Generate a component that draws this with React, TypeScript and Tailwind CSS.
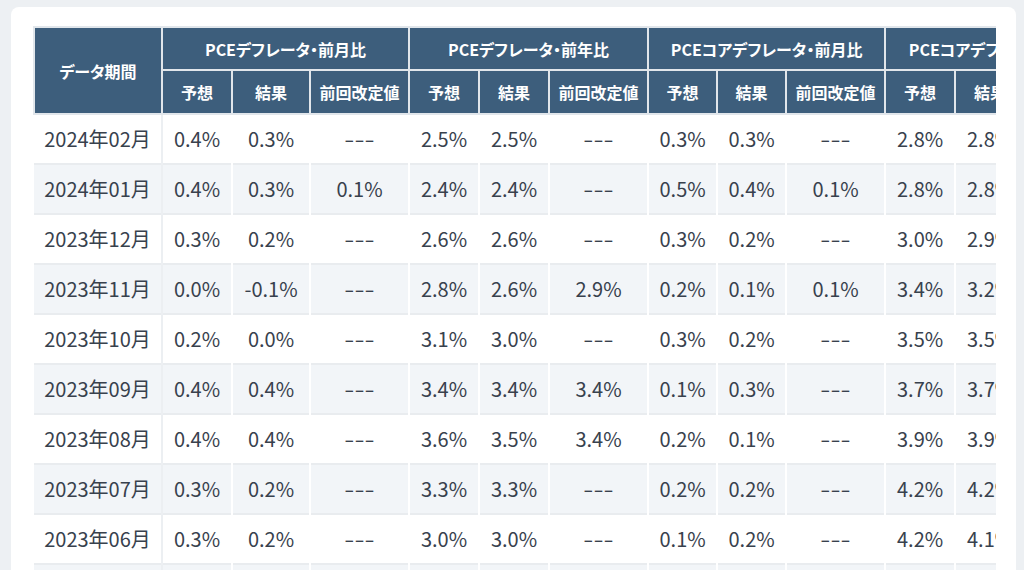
type Row = {
  period: string
  values: string[]
}

const groups = [
  "PCEデフレータ・前月比",
  "PCEデフレータ・前年比",
  "PCEコアデフレータ・前月比",
  "PCEコアデフレータ・前年比",
]

const subHeads = ["予想", "結果", "前回改定値"]

const colWidths = [70, 78, 99, 70, 70, 99, 69, 69, 99, 70, 70, 99]

const rows: Row[] = [
  { period: "2024年02月", values: ["0.4%", "0.3%", "---", "2.5%", "2.5%", "---", "0.3%", "0.3%", "---", "2.8%", "2.8%", "---"] },
  { period: "2024年01月", values: ["0.4%", "0.3%", "0.1%", "2.4%", "2.4%", "---", "0.5%", "0.4%", "0.1%", "2.8%", "2.8%", "2.9%"] },
  { period: "2023年12月", values: ["0.3%", "0.2%", "---", "2.6%", "2.6%", "---", "0.3%", "0.2%", "---", "3.0%", "2.9%", "---"] },
  { period: "2023年11月", values: ["0.0%", "-0.1%", "---", "2.8%", "2.6%", "2.9%", "0.2%", "0.1%", "0.1%", "3.4%", "3.2%", "---"] },
  { period: "2023年10月", values: ["0.2%", "0.0%", "---", "3.1%", "3.0%", "---", "0.3%", "0.2%", "---", "3.5%", "3.5%", "---"] },
  { period: "2023年09月", values: ["0.4%", "0.4%", "---", "3.4%", "3.4%", "3.4%", "0.1%", "0.3%", "---", "3.7%", "3.7%", "---"] },
  { period: "2023年08月", values: ["0.4%", "0.4%", "---", "3.6%", "3.5%", "3.4%", "0.2%", "0.1%", "---", "3.9%", "3.9%", "---"] },
  { period: "2023年07月", values: ["0.3%", "0.2%", "---", "3.3%", "3.3%", "---", "0.2%", "0.2%", "---", "4.2%", "4.2%", "---"] },
  { period: "2023年06月", values: ["0.3%", "0.2%", "---", "3.0%", "3.0%", "---", "0.1%", "0.2%", "---", "4.2%", "4.1%", "---"] },
  { period: "2023年05月", values: ["0.1%", "0.1%", "---", "3.8%", "3.8%", "---", "0.3%", "0.3%", "---", "4.7%", "4.6%", "---"] },
]

export default function App() {
  return (
    <div className="h-[570px] overflow-hidden bg-[#edf0f3] pt-[7px] font-['Noto_Sans_CJK_JP',sans-serif]">
      <div className="ml-[11px] w-[1005px] rounded-lg bg-white px-[22px] pt-[19px] pb-6">
        <div className="w-[963px] overflow-hidden">
          <table className="table-fixed border-collapse w-[1090px]">
            <colgroup>
              <col className="w-[128px]" />
              {colWidths.map((w, i) => (
                <col key={i} style={{ width: w }} />
              ))}
            </colgroup>
            <thead className="text-white [font-feature-settings:'palt']">
              <tr className="h-[43px]">
                <th
                  rowSpan={2}
                  className="border-2 border-[#e1e6eb] bg-[#3d5e7c] text-[16px] font-bold"
                >
                  データ期間
                </th>
                {groups.map((g) => (
                  <th
                    key={g}
                    colSpan={3}
                    className="whitespace-nowrap border-2 border-[#e1e6eb] bg-[#3d5e7c] text-[16px] font-bold"
                  >
                    {g}
                  </th>
                ))}
              </tr>
              <tr className="h-[44px]">
                {groups.map((g) =>
                  subHeads.map((s) => (
                    <th
                      key={g + s}
                      className="whitespace-nowrap border-2 border-[#e1e6eb] bg-[#3d5e7c] text-[16px] font-bold"
                    >
                      {s}
                    </th>
                  ))
                )}
              </tr>
            </thead>
            <tbody className="text-[20px] text-[#38414d]">
              {rows.map((row, i) => (
                <tr
                  key={row.period}
                  className={`h-[50px] border-b-2 border-[#e9ecef] ${i % 2 === 1 ? "bg-[#f2f5f8]" : "bg-white"}`}
                >
                  <td className="whitespace-nowrap border-r-2 border-[#eceff2] text-center">
                    {row.period}
                  </td>
                  {row.values.map((v, j) => (
                    <td
                      key={j}
                      className="whitespace-nowrap border-x-2 border-white text-center"
                    >
                      {v === "---" ? (
                        <span className="inline-block scale-x-[1.45]">{v}</span>
                      ) : (
                        v
                      )}
                    </td>
                  ))}
                </tr>
              ))}
            </tbody>
          </table>
        </div>
      </div>
    </div>
  )
}
